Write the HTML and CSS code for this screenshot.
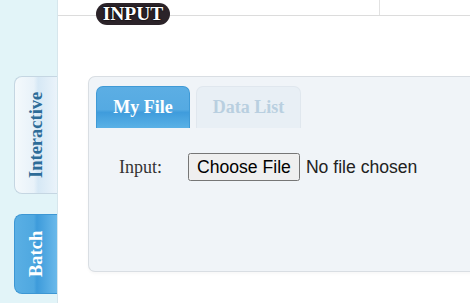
FILE: index.html
```html
<!DOCTYPE html>
<html lang="en">
<head>
    <meta charset="UTF-8">
    <meta name="viewport" content="width=device-width, initial-scale=1.0">
    <title>Input</title>
    <link rel="stylesheet" href="styles.css">
</head>
<body>
    <div class="page">
        <div class="sidebar">
            <div class="side-tab">Interactive</div>
            <div class="side-tab active">Batch</div>
        </div>

        <div class="main">
            <div class="header">
                <div class="header-cell"></div>
                <div class="header-cell"></div>
            </div>
            <span class="badge">INPUT</span>

            <div class="panel">
                <div class="tabs">
                    <div class="tab active">My File</div>
                    <div class="tab">Data List</div>
                </div>
                <div class="input-row">
                    <label for="file">Input:</label>
                    <input type="file" id="file">
                </div>
            </div>
        </div>
    </div>
</body>
</html>
```

FILE: styles.css
```css
body {
    margin: 0;
    font-family: "Liberation Serif", "Times New Roman", serif;
    background: #fff;
}
.page {
    display: flex;
    height: 303px;
    overflow: hidden;
}
.sidebar {
    width: 58px;
    flex-shrink: 0;
    box-sizing: border-box;
    background: #e2f4f8;
    border-right: 1px solid #d6e6ec;
    display: flex;
    flex-direction: column;
    align-items: flex-end;
    padding-top: 76px;
    gap: 20px;
}
.side-tab {
    width: 43px;
    box-sizing: border-box;
    writing-mode: vertical-rl;
    transform: rotate(180deg);
    display: flex;
    align-items: center;
    justify-content: center;
    font-weight: bold;
    font-size: 18.5px;
    color: #2d6c98;
    height: 118px;
    border: 1px solid #c5d6e2;
    border-left: none;
    border-radius: 0 8px 8px 0;
    background: linear-gradient(to left, #f4f9fc 0%, #e8f2f9 45%, #d6e8f5 55%, #eaf3fa 100%);
}
.side-tab.active {
    height: 80px;
    color: #fff;
    border-color: #3d97d4;
    background: linear-gradient(to left, #5aafe4 0%, #4fa8e0 45%, #3d9bdb 52%, #6ab9ea 100%);
}
.main {
    flex: 1;
    position: relative;
}
.header {
    display: flex;
    height: 15px;
    border-bottom: 1px solid #dcdcdc;
}
.header-cell {
    width: 321px;
    border-right: 1px solid #e2e2e2;
}
.header-cell + .header-cell {
    border-right: none;
    flex: 1;
}
.badge {
    position: absolute;
    left: 38px;
    top: 3px;
    width: 74px;
    height: 22px;
    box-sizing: border-box;
    background: #2b2329;
    border-radius: 11px;
    color: #fff;
    font-weight: bold;
    font-size: 19.5px;
    line-height: 22px;
    text-align: center;
    text-shadow: 0 0 2px #000, 0 0 1px #000;
}
.panel {
    margin: 60px 0 0 30px;
    width: 420px;
    height: 196px;
    box-sizing: border-box;
    background: #f0f4f8;
    border: 1px solid #d9dee3;
    border-right: none;
    border-radius: 7px 0 0 7px;
    box-shadow: 0 2px 3px rgba(0,0,0,0.03);
    padding: 9px 0 0 7px;
}
.tabs {
    display: flex;
    gap: 6px;
}
.tab {
    width: 105px;
    height: 42px;
    box-sizing: border-box;
    display: flex;
    align-items: center;
    justify-content: center;
    font-weight: bold;
    font-size: 18px;
    color: #b9cfe0;
    background: #e8eff5;
    border: 1px solid #e0e7ee;
    border-bottom: none;
    border-radius: 7px 7px 0 0;
}
.tab.active {
    width: 94px;
    color: #fff;
    border-color: #3f9ad6;
    background: linear-gradient(to bottom, #5caee4 0%, #55aae2 55%, #3f9cdc 62%, #5ab1e6 100%);
}
.input-row {
    display: flex;
    align-items: center;
    margin-top: 25px;
    padding-left: 23px;
}
label {
    width: 69px;
    flex-shrink: 0;
    font-size: 18px;
    color: #333;
}
input[type="file"] {
    font-family: "Liberation Sans", Arial, sans-serif;
    font-size: 17.6px;
    color: #222;
}
input[type="file"]::file-selector-button {
    height: 28px;
    padding: 1px 7px;
    margin-right: 6px;
}
```
